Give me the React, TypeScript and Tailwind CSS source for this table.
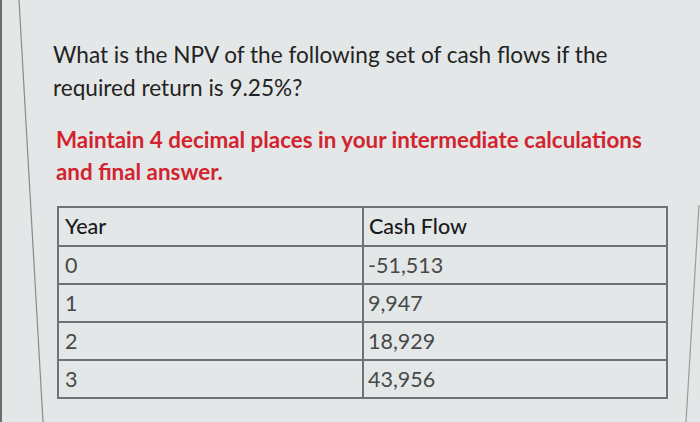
import React from 'react';

const rows = [
  { year: '0', cash: '-51,513' },
  { year: '1', cash: '9,947' },
  { year: '2', cash: '18,929' },
  { year: '3', cash: '43,956' },
];

const App: React.FC = () => {
  return (
    <div className="relative w-[700px] h-[422px] overflow-hidden bg-[#e4e7e7] font-['Lato','Open_Sans',sans-serif]">
      <svg className="absolute inset-0 pointer-events-none" width="700" height="422">
        <rect x="0" y="0" width="2" height="422" fill="#6b6d6d" />
        <line x1="19" y1="0" x2="43" y2="422" stroke="#8a8c8c" strokeWidth="1.2" />
        <line x1="699" y1="205" x2="686" y2="422" stroke="#9a9c9c" strokeWidth="1.2" />
      </svg>

      <div className="pl-[53px] pt-[38px] pr-[30px]">
        <p className="text-[22.6px] leading-[33px] text-[#232323]">
          What is the NPV of the following set of cash flows if the
          <br />
          required return is 9.25%?
        </p>

        <p className="mt-[20px] ml-[3px] text-[22.4px] leading-[32px] font-bold text-[#d2232f]">
          Maintain 4 decimal places in your intermediate calculations
          <br />
          and final answer.
        </p>

        <table className="mt-[18px] ml-[4px] w-[611px] border-collapse border-2 border-[#6f7272] text-[21.5px]">
          <thead>
            <tr className="h-[39px]">
              <th className="w-[305px] border-2 border-[#6f7272] px-[6px] text-left font-medium text-[#1a1a1a]">Year</th>
              <th className="border-2 border-[#6f7272] px-[5px] text-left font-medium text-[#1a1a1a]">Cash Flow</th>
            </tr>
          </thead>
          <tbody>
            {rows.map((r) => (
              <tr key={r.year} className="h-[38px]">
                <td className="border-2 border-[#6f7272] px-[6px] text-[#474949]">{r.year}</td>
                <td className="border-2 border-[#6f7272] px-[4px] text-[#474949]">{r.cash}</td>
              </tr>
            ))}
          </tbody>
        </table>
      </div>
    </div>
  );
};

export default App;
